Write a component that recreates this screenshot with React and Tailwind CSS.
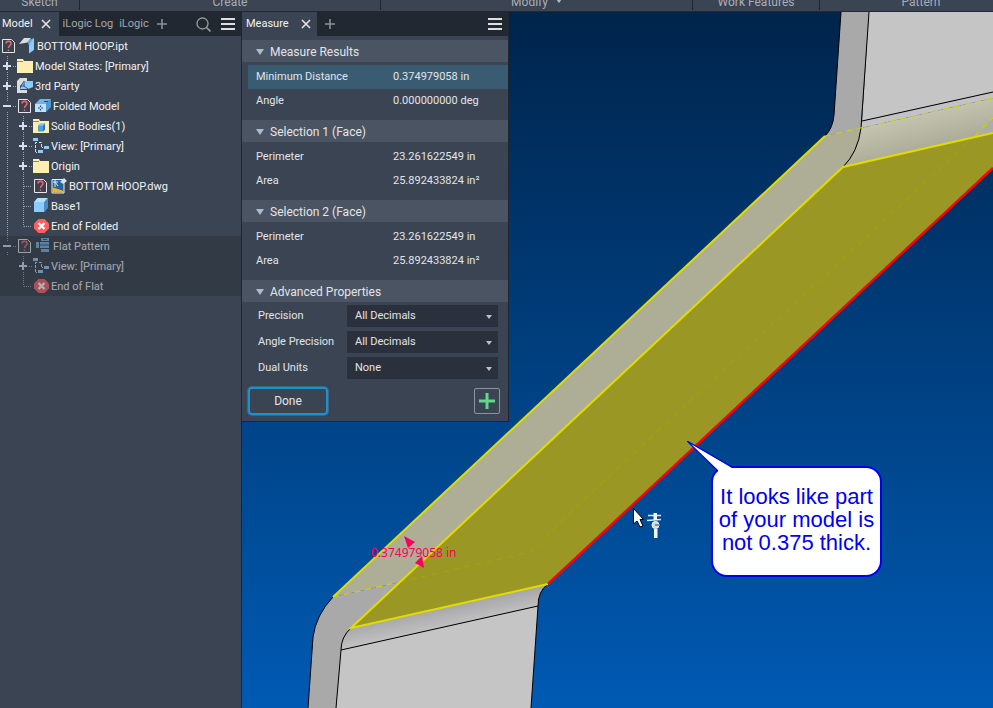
import { Fragment } from 'react';
import clsx from 'clsx';

const RIBBON = [
  { label: 'Sketch', width: 'w-20' },
  { label: 'Create', width: 'w-[301px]' },
  { label: 'Modify', width: 'w-[312px]', menu: true },
  { label: 'Work Features', width: 'w-[127px]' },
  { label: 'Pattern', width: 'w-[203px]' },
];

// guides: one entry per 16px column, read left to right
const MODEL_TREE = [
  { label: 'BOTTOM HOOP.ipt', guides: [], icons: ['unknown', 'part'] },
  { label: 'Model States: [Primary]', guides: ['plus'], icons: ['folder'] },
  { label: '3rd Party', guides: ['plus'], icons: ['thirdParty'] },
  { label: 'Folded Model', guides: ['minus'], icons: ['unknown', 'folded'] },
  { label: 'Solid Bodies(1)', guides: ['line', 'plus'], icons: ['solids'] },
  { label: 'View: [Primary]', guides: ['line', 'plus'], icons: ['view'] },
  { label: 'Origin', guides: ['line', 'plus'], icons: ['folder'] },
  { label: 'BOTTOM HOOP.dwg', guides: ['line', 'tee'], icons: ['unknown', 'drawing'] },
  { label: 'Base1', guides: ['line', 'tee'], icons: ['cube'] },
  { label: 'End of Folded', guides: ['line', 'end'], icons: ['stop'] },
];

const FLAT_TREE = [
  { label: 'Flat Pattern', guides: ['minus'], icons: ['unknown', 'flat'] },
  { label: 'View: [Primary]', guides: ['none', 'plus'], icons: ['view'] },
  { label: 'End of Flat', guides: ['none', 'end'], icons: ['stop'] },
];

const RESULTS = [
  {
    title: 'Measure Results',
    rows: [
      { label: 'Minimum Distance', value: '0.374979058 in', active: true },
      { label: 'Angle', value: '0.000000000 deg' },
    ],
  },
  {
    title: 'Selection 1 (Face)',
    rows: [
      { label: 'Perimeter', value: '23.261622549 in' },
      { label: 'Area', value: '25.892433824 in²' },
    ],
  },
  {
    title: 'Selection 2 (Face)',
    rows: [
      { label: 'Perimeter', value: '23.261622549 in' },
      { label: 'Area', value: '25.892433824 in²' },
    ],
  },
];

const OPTIONS = [
  { id: 'precision', label: 'Precision', value: 'All Decimals' },
  { id: 'angle-precision', label: 'Angle Precision', value: 'All Decimals' },
  { id: 'dual-units', label: 'Dual Units', value: 'None' },
];

const ICONS = {
  unknown: (
    <>
      <path d="M1.500 1.500h9l3 3v10h-12z" fill="#39424f" stroke="#e6e6e6" />
      <path d="M5 5.500c0-3 5-3 5 0 0 2-2.500 2-2.500 4.500M7.500 11.500v1.500" fill="none" stroke="#ee6a72" strokeWidth="1.500" />
    </>
  ),
  part: (
    <>
      <path d="M5 0h7L8.500 4.500 0 6z" fill="#dcdcdc" />
      <path d="M9 3l6-3v12l-5 3.500V7z" fill="#8ccbff" />
      <path d="M9 3l6-3-4 5-1 3z" fill="#5fa8e0" />
    </>
  ),
  folder: (
    <>
      <path d="M0 1h6l1 2h9v12H0z" fill="#ffeeb0" />
      <path d="M0 3.500h6" stroke="#8b8672" />
    </>
  ),
  thirdParty: (
    <>
      <path d="M0 15V3l3-3h7v3H7L3 8v4h7v3z" fill="#dcdcdc" />
      <path d="M7 3h9v6l-5 2H3z" fill="#8ccbff" />
      <path d="M7 3v5H4M7 8l4 3" fill="none" stroke="#27567d" />
    </>
  ),
  folded: (
    <>
      <path d="M0 6l5-5h11l-5 5z" fill="#6fb4e6" />
      <path d="M0 6h11v8H0z" fill="#bfe3ff" />
      <path d="M11 6l5-5v8l-5 5z" fill="#4f9ad4" />
      <path d="M5.500 7.500v5M3 10h5M9 3.500h4" stroke="#27455e" strokeWidth="1.200" />
      <circle cx="5.500" cy="10" r="1" fill="#bfe3ff" />
    </>
  ),
  solids: (
    <>
      <path d="M0 1h6l1 2h9v12H0z" fill="#ffeeb0" />
      <path d="M0 3.500h6" stroke="#8b8672" />
      <path d="M5 7.500l2-2h5v6l-2 2H5z" fill="#4f9fd8" />
      <path d="M5 7.500l2-2h5l-2 2z" fill="#8ccbff" />
      <path d="M10 7.500l2-2v6l-2 2z" fill="#2b78b5" />
    </>
  ),
  view: (
    <>
      <path d="M0 0h5v3H0zM11 8h5v3h-5zM5 12h5v3H5z" fill="#8ccbff" />
      <path d="M4 4.500H2.500v10H4M6 4.500h2.500v5H10" fill="none" stroke="#dcdcdc" strokeDasharray="3 1" />
    </>
  ),
  drawing: (
    <>
      <path d="M1 1.500h12V15H1z" fill="#2265a0" stroke="#eee" />
      <path d="M1.500 9.500L7 11l5.500 2v1.500h-11z" fill="#fbb01d" />
      <path d="M2 4h5M4 2v7M4 4l3 4" stroke="#e6e6e6" fill="none" />
      <path d="M8 8l3-3-2-1 4-4 3 3-4 3-1-1z" fill="#e0e0e0" />
    </>
  ),
  cube: (
    <>
      <path d="M1 4l3.500-4H15l-3.500 4z" fill="#b5dfff" />
      <path d="M1 4h10.500v10H1z" fill="#8ccbff" />
      <path d="M11.500 4L15 0v10l-3.500 4z" fill="#3f8fce" />
    </>
  ),
  stop: (
    <>
      <path d="M5.500 1h6L16 5.500v5L11.500 15h-6L1 10.500v-5z" fill="#ff5f5f" />
      <path d="M5.500 5l6 6M11.500 5l-6 6" stroke="#fff" strokeWidth="2.400" />
    </>
  ),
  flat: (
    <>
      <path d="M6 0h8v3H6zM1 4h3v6H1zM5 4h9v6H5zM6 11h8v3H6z" fill="#76b4e6" />
      <path d="M8 1.500h4M5 7h9" stroke="#2f4f6a" />
    </>
  ),
};

function TreeIcon({ name }) {
  return (
    <svg viewBox="0 0 16 16" className="size-4 shrink-0" aria-hidden="true">
      {ICONS[name]}
    </svg>
  );
}

function Guide({ kind }) {
  const dots = { stroke: '#9aa2ad', strokeDasharray: '1 1', fill: 'none' };
  const sign = kind === 'plus' || kind === 'minus';
  return (
    <svg viewBox="0 0 16 20" className="h-5 w-4 shrink-0" aria-hidden="true">
      {(kind === 'line' || kind === 'tee') && <path d="M7.500 0V20" {...dots} />}
      {kind === 'end' && <path d="M7.500 0V10.500" {...dots} />}
      {sign && <path d="M7.500 0V5M7.500 16V20" {...dots} />}
      {(kind === 'tee' || kind === 'end') && <path d="M8 10.500H16" {...dots} />}
      {sign && <path d="M13 10.500H16" {...dots} />}
      {sign && <path d={kind === 'plus' ? 'M3 10h8M7 6v8' : 'M3 10h8'} stroke="#d5e0ee" strokeWidth="2" />}
    </svg>
  );
}

function Tree({ items, muted }) {
  return (
    <ul className={clsx(muted && 'bg-[#323a46]')}>
      {items.map((item) => (
        <li key={item.label} className={clsx('flex h-5 items-center whitespace-nowrap', muted && 'opacity-60')}>
          {item.guides.map((kind, i) => (
            <Guide key={i} kind={kind} />
          ))}
          <span className="flex gap-0.5 px-px">
            {item.icons.map((name) => (
              <TreeIcon key={name} name={name} />
            ))}
          </span>
          <span className="pt-0.5 pl-px leading-5">{item.label}</span>
        </li>
      ))}
    </ul>
  );
}

function CloseIcon() {
  return (
    <svg viewBox="0 0 10 10" className="size-2.5" aria-hidden="true">
      <path d="M1 1l8 8M9 1L1 9" stroke="#e4e4e4" strokeWidth="1.600" />
    </svg>
  );
}

function AddIcon() {
  return (
    <svg viewBox="0 0 10 10" className="size-2.5" aria-hidden="true">
      <path d="M5 0v10M0 5h10" stroke="#8d9094" strokeWidth="1.600" />
    </svg>
  );
}

function MenuIcon() {
  return (
    <svg viewBox="0 0 14 12" className="h-3 w-3.5" aria-hidden="true">
      <path d="M0 1h14M0 6h14M0 11h14" stroke="#dedede" strokeWidth="2" />
    </svg>
  );
}

function Ribbon() {
  return (
    <header className="flex h-3 shrink-0 overflow-hidden border-b border-[#232a33] bg-[#3b4453] text-xs text-[#a9afb8]">
      {RIBBON.map((group) => (
        <div
          key={group.label}
          className={clsx('flex h-2.5 shrink-0 items-end justify-center gap-2 border-r border-[#20262f]', group.width)}
        >
          <span className="leading-4">{group.label}</span>
          {group.menu && (
            <svg viewBox="0 0 6 12" className="h-3 w-1.5" aria-hidden="true">
              <path d="M0 1h6L3 5z" fill="#b4bac2" />
            </svg>
          )}
        </div>
      ))}
    </header>
  );
}

function ModelBrowser() {
  return (
    <aside className="w-[242px] shrink-0 border-r border-[#20262f] bg-[#3b4453] text-[11px] text-[#f2f2f2]">
      <div className="flex h-6 items-center bg-[#222831]">
        <button className="flex h-6 items-center gap-2 bg-[#3b4453] pr-2 pl-0.5">
          Model <CloseIcon />
        </button>
        <button className="ml-1 text-[#a4a7ab]">iLogic Log</button>
        <button className="ml-1.5 text-[#a4a7ab]">iLogic</button>
        <button className="ml-2" aria-label="Add tab">
          <AddIcon />
        </button>
        <button className="ml-auto" aria-label="Search">
          <svg viewBox="0 0 15 15" className="size-[15px]" aria-hidden="true">
            <circle cx="6.500" cy="6.500" r="5.500" fill="none" stroke="#9a9a9a" strokeWidth="1.300" />
            <path d="M10.500 10.500l4 4" stroke="#9a9a9a" strokeWidth="1.600" />
          </svg>
        </button>
        <button className="mr-1.5 ml-2.5" aria-label="Browser menu">
          <MenuIcon />
        </button>
      </div>
      <Tree items={MODEL_TREE} />
      <Tree items={FLAT_TREE} muted />
    </aside>
  );
}

function SectionTitle({ children }) {
  return (
    <h2 className="flex h-[22px] items-center gap-1.5 bg-[#4b5463] pt-0.5 pl-3.5 text-xs text-[#e2e4e8]">
      <svg viewBox="0 0 8 6" className="h-1.5 w-2" aria-hidden="true">
        <path d="M0 0h8L4 6z" fill="#aebdce" />
      </svg>
      {children}
    </h2>
  );
}

function MeasurePanel() {
  return (
    <section className="absolute top-0 left-0 w-[267px] border-r border-b border-[#20262f] bg-[#3b4453] pb-1.5 text-[11px] text-[#e2e4e8]">
      <div className="flex h-6 items-center bg-[#222831]">
        <button className="flex h-6 items-center gap-3 bg-[#3b4453] pr-1.5 pl-1 text-[#f2f2f2]">
          Measure <CloseIcon />
        </button>
        <button className="ml-2" aria-label="Add tab">
          <AddIcon />
        </button>
        <button className="mr-1.5 ml-auto" aria-label="Panel menu">
          <MenuIcon />
        </button>
      </div>
      <div className="pt-1">
        {RESULTS.map((group) => (
          <Fragment key={group.title}>
            <SectionTitle>{group.title}</SectionTitle>
            <dl className="pt-[3px] pb-[7px] pl-1.5">
              {group.rows.map((row) => (
                <div key={row.label} className={clsx('flex h-6 items-center pl-2', row.active && 'bg-[#395c73]')}>
                  <dt className="w-[137px]">{row.label}</dt>
                  <dd>{row.value}</dd>
                </div>
              ))}
            </dl>
          </Fragment>
        ))}
        <SectionTitle>Advanced Properties</SectionTitle>
        <div className="flex flex-col gap-1 pt-[3px] pr-2.5 pl-4">
          {OPTIONS.map((option) => (
            <div key={option.id} className="flex items-center">
              <label htmlFor={option.id} className="w-[89px]">
                {option.label}
              </label>
              <div className="relative flex-1">
                <select
                  id={option.id}
                  defaultValue={option.value}
                  className="block h-[22px] w-full appearance-none bg-[#2a313d] pl-2"
                >
                  <option>{option.value}</option>
                </select>
                <svg viewBox="0 0 6 4" className="pointer-events-none absolute top-2.5 right-1.5 h-1 w-1.5" aria-hidden="true">
                  <path d="M0 0h6L3 4z" fill="#b9c3cf" />
                </svg>
              </div>
            </div>
          ))}
        </div>
        <div className="flex items-center justify-between pt-2 pr-2 pl-1.5">
          <button className="h-7 w-20 rounded-sm border-2 border-[#1a92d0] text-xs ring-1 ring-[#3b6480]">Done</button>
          <button className="flex size-[26px] items-center justify-center rounded-xs border border-[#8b939f]" aria-label="Add">
            <svg viewBox="0 0 16 16" className="size-4" aria-hidden="true">
              <path d="M8 0v16M0 8h16" stroke="#5fd98a" strokeWidth="3" />
            </svg>
          </button>
        </div>
      </div>
    </section>
  );
}

function PartScene() {
  return (
    <svg
      viewBox="242 12 751 696"
      preserveAspectRatio="xMinYMin slice"
      className="absolute inset-0 size-full"
      role="img"
      aria-label="Bent sheet metal part"
    >
      <defs>
        <linearGradient id="lower-bend" gradientUnits="userSpaceOnUse" x1="444" y1="606" x2="449" y2="630">
          <stop offset="0" stopColor="#a6a6a9" />
          <stop offset="1" stopColor="#c5c5c5" />
        </linearGradient>
        <linearGradient id="upper-bend" gradientUnits="userSpaceOnUse" x1="920" y1="110" x2="930" y2="149">
          <stop offset="0" stopColor="#c6c6b4" />
          <stop offset="1" stopColor="#acab97" />
        </linearGradient>
      </defs>

      {/* side wall */}
      <path d="M308 708L313 637Q316 615 333 597L400 582L351 628Q341 637 341 650L336 708z" fill="#a9a9a9" />
      <path d="M841 12L834 115Q833 128 825 136L861 128L869 12z" fill="#a9a9a9" />
      <path d="M333 597L825 136L861 127Q858 152 843 167L400 582z" fill="#aead95" />

      {/* upper flange */}
      <path d="M869 12H993V92L862 121z" fill="#c5c5c5" />
      <path d="M862 121L993 92V98L861 128z" fill="#c3c3c6" />
      <path d="M861 128L993 98V133L843 167Q858 152 861 128z" fill="url(#upper-bend)" />
      <path d="M974 137L993 118V133z" fill="#acabb0" />

      {/* lower flange */}
      <path d="M351 628L548 584Q538 591 538 606L341 650Q341 637 351 628z" fill="url(#lower-bend)" />
      <path d="M341 650L538 606L531 708H336z" fill="#c5c5c5" />

      {/* selected face */}
      <path d="M351 628L843 167L993 133V168L548 584z" fill="#9b9724" />

      <g fill="none" stroke="#000">
        <path d="M308 708L313 637Q316 615 333 597" />
        <path d="M336 708L341 650Q341 637 351 628" />
        <path d="M341 650L538 606M531 708L538 606Q538 591 548 584" />
        <path d="M841 12L834 115Q833 128 825 136" />
        <path d="M869 12L861 128Q858 152 843 167M862 121L993 92" />
      </g>

      <g fill="none" stroke="#d8d400" strokeDasharray="6 5">
        <path d="M333 597L400 582M825 136L993 98M975 136L993 118" />
        <path d="M400 582L530 552Q540 545 560 522L975 136" stroke="#a9a500" />
      </g>
      <g fill="none" stroke="#e0dc00" strokeWidth="2">
        <path d="M333 597L825 136" />
        <path d="M548 584L351 628L843 167L993 133" />
      </g>
      <path d="M548 584L993 168" stroke="#f00" strokeWidth="2.500" />

      {/* dimension */}
      <g fill="#f5005f">
        <path d="M404 536L415 542L408 548z" />
        <path d="M424 568L415 563L422 556z" />
        <text x="371" y="557" className="font-['Noto_Sans',sans-serif] text-xs">
          0.374979058 in
        </text>
      </g>

      {/* cursor with measure badge */}
      <path d="M633.500 508.500V524L637 521L640 527L643 526L640 519.500H643.500z" fill="#fff" stroke="#000" />
      <g>
        <path d="M648 515.500h13M647 520.500l14-1" stroke="#dbe5ee" strokeWidth="1.500" />
        <path d="M653.500 513h3.500v7h-3.500zM654 529h3.500v9H654z" fill="#f4f4f4" />
        <circle cx="655.500" cy="525" r="3.500" fill="#c9dbea" stroke="#fff" />
        <path d="M655 525h4" stroke="#174a80" />
      </g>
    </svg>
  );
}

function Callout() {
  return (
    <div className="absolute top-[454px] left-[469px] flex h-[111px] w-[171px] items-center justify-center rounded-2xl border-2 border-[#0000f0] bg-white pb-1">
      <svg viewBox="0 0 46 32" className="absolute -top-[27px] -left-[26px] h-8 w-[46px]" aria-hidden="true">
        <path d="M0 0L32 31L45 27z" fill="#fff" />
        <path d="M31 30L0 0L45 26" fill="none" stroke="#0000f0" strokeWidth="1.200" />
      </svg>
      <p className="text-center font-['Liberation_Sans',sans-serif] text-[22px] leading-[23px] whitespace-nowrap text-[#0000f0]">
        It looks like part
        <br />
        of your model is
        <br />
        not 0.375 thick.
      </p>
    </div>
  );
}

export default function App() {
  return (
    <div className="flex h-screen flex-col overflow-hidden font-[Roboto,sans-serif]">
      <Ribbon />
      <div className="flex min-h-0 flex-1">
        <ModelBrowser />
        <main className="relative flex-1 overflow-hidden bg-linear-to-b/srgb from-[#00244b] to-[#005ab3]">
          <PartScene />
          <MeasurePanel />
          <Callout />
        </main>
      </div>
    </div>
  );
}
